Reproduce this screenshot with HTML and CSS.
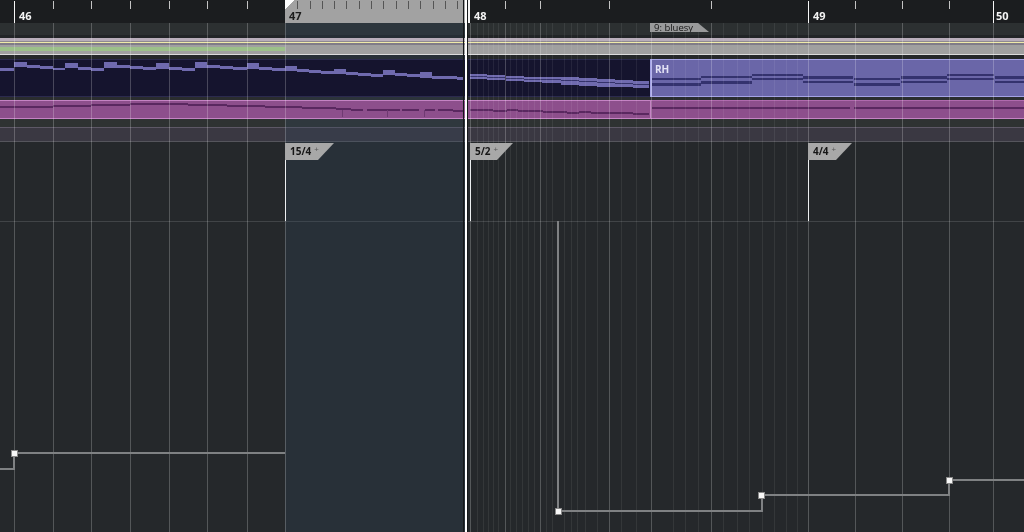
FILE: index.html
```html
<!DOCTYPE html>
<html lang="en">
<head>
<meta charset="utf-8">
<title>Arrangement</title>
<link rel="stylesheet" href="styles.css">
</head>
<body>
<main class="stage">
  <header class="ruler">
    <div class="range"></div>
  </header>
  <div class="marker-lane"></div>
  <section class="track stripes">
    <div class="s-lilac"></div>
    <div class="s-soft"></div>
    <div class="s-yellow"></div>
    <div class="s-gap"></div>
    <div class="s-grey"></div>
    <div class="s-white"></div>
  </section>
  <div class="gap-a"></div>
  <section class="track midi">
    <div class="part-dark"></div>
    <div class="part-rh"><span class="part-name">RH</span></div>
  </section>
  <div class="gap-b"></div>
  <section class="track pink">
    <div class="pink-a"></div>
    <div class="pink-b"></div>
  </section>
  <div class="gap-c"></div>
  <div class="lane-tempo"></div>
  <div class="lane-sig"></div>
  <div class="lane-auto"></div>

  <div class="band"></div>

  <svg class="overlay" width="1024" height="532" viewBox="0 0 1024 532" aria-hidden="true">
    <!-- green automation strip on the first track -->
    <path class="green" d="M0 47h285v4H0z"/>
    <!-- notes -->
    <path class="note" d="M0 68h14v3H0zM14 62h13v5H14zM27 65h13v3H27zM40 66h13v3H40zM53 68h12v2H53zM65 63h13v5H65zM78 67h13v3H78zM91 68h13v3H91zM104 62h13v6h-13zM117 65h13v3h-13zM130 66h13v3h-13zM143 67h13v3h-13zM156 63h13v6h-13zM169 67h13v3h-13zM182 68h13v3h-13zM195 62h12v6h-12zM207 65h13v3h-13zM220 66h13v3h-13zM233 67h14v3h-14zM247 63h12v6h-12zM259 67h13v3h-13zM272 68h13v3h-13zM285 66h12v5h-12zM297 69h12v3h-12zM309 70h12v3h-12zM321 71h13v3h-13zM334 69h12v5h-12zM346 72h12v3h-12zM358 73h13v3h-13zM371 74h12v3h-12zM383 70h12v5h-12zM395 73h12v3h-12zM407 74h13v3h-13zM420 72h12v6h-12zM432 76h13v3h-13zM445 76h12v3h-12zM457 77h7v3h-7z"/>
    <path class="note" d="M470 74h17v5h-17zM487 75h18v5h-18zM506 76h18v5h-18zM524 77h18v5h-18zM542 77h19v6h-19zM561 77h18v8h-18zM579 78h18v8h-18zM597 79h18v8h-18zM615 80h18v7h-18zM633 81h16v7h-16z"/>
    <path class="note-line" d="M561 80.500h18M579 81.500h18M597 82.500h18M615 83.500h18M633 84.500h16M542 79.500h19M524 79.500h18M506 78.500h18M487 77.500h18M470 76.500h17"/>
    <path class="note-dark" d="M652 78h49v2h-49zM652 83h49v3h-49zM701 76h51v2h-51zM701 81h51v3h-51zM752 74h51v2h-51zM752 78h51v2h-51zM803 76h50v3h-50zM803 81h50v2h-50zM854 78h46v2h-46zM854 83h46v3h-46zM901 76h46v3h-46zM901 81h46v2h-46zM947 74h47v2h-47zM947 78h47v2h-47zM995 76h29v3h-29zM995 81h29v2h-29z"/>
    <path class="pink-note" d="M0 107h53M53 106h38M91 105h39M130 104h58M188 105h39M227 106h38M265 107h37M302 108h34M336 109h15M351 110h12M367 110h33M402 110h17M425 110h10M438 110h15M453 111h11M470 110h23M493 111h14M507 110h11M518 111h25M543 112h24M567 113h12M579 112h12M591 113h42M633 114h16M652 108h198M854 108h170"/>
    <path class="pink-tick" d="M342.500 110v7M387.500 110v7M424.500 110v7"/>
    <!-- grid -->
    <path class="fine" d="M477 23V532M483 23V532M488 23V532M493 23V532M498 23V532M510 23V532M516 23V532M522 23V532M528 23V532M534 23V532M546 23V532M552 23V532M564 23V532M571 23V532M577 23V532M585 23V532M597 23V532M621 23V532M636 23V532M673 23V532M685 23V532M698 23V532M723 23V532M737 23V532M749 23V532M762 23V532M774 23V532M786 23V532M797 23V532"/>
    <path class="beat" d="M14.500 23V532M53.500 23V532M91.500 23V532M130.500 23V532M169.500 23V532M207.500 23V532M247.500 23V532M285.500 23V532M505.500 23V532M540.500 23V532M609.500 23V532M651 23V532M711.500 23V532M808.500 23V532M855.500 23V532M902.500 23V532M949.500 23V532M993.500 23V532M470.500 23V532"/>
    <!-- signature flags poles -->
    <path class="pole" d="M285.500 143V221M470.500 143V221M808.500 143V221"/>
    <!-- ruler ticks -->
    <path class="tick" d="M53.500 1v8M91.500 1v8M130.500 1v8M169.500 1v8M207.500 1v8M247.500 1v8M505.500 1v8M540.500 1v8M609.500 1v8M711.500 1v8M855.500 1v8M902.500 1v8M949.500 1v8"/>
    <path class="tick-bar" d="M14.500 1V23M808.500 1V23M993.500 1V23"/>
    <path class="tick-range" d="M297.500 1v8M310.500 1v8M322.500 1v8M334.500 1v8M346.500 1v8M359.500 1v8M371.500 1v8M383.500 1v8M396.500 1v8M408.500 1v8M420.500 1v8M433.500 1v8M445.500 1v8M457.500 1v8"/>
    <path class="corner" d="M285 0h9l-9 9z"/>
    <!-- automation curve -->
    <path class="curve" d="M0 469H14V453H285M557.500 221V511H761.500V495H949V480H1024"/>
    <path class="point" d="M11 450h6v6h-6zM555 508h6v6h-6zM758 492h6v6h-6zM946 477h6v6h-6z"/>
    <!-- playhead -->
    <path class="head-shadow" d="M467.500 0V532M463.500 0V532"/>
    <path class="head" d="M465.500 0V532"/>
    <path class="bar-48" d="M469 0V23"/>
  </svg>

  <span class="bar bar-46">46</span>
  <span class="bar bar-47">47</span>
  <span class="bar bar-48-label">48</span>
  <span class="bar bar-49">49</span>
  <span class="bar bar-50">50</span>

  <span class="marker">9: bluesy</span>

  <span class="sig sig-a">15/4<sup>+</sup></span>
  <span class="sig sig-b">5/2<sup>+</sup></span>
  <span class="sig sig-c">4/4<sup>+</sup></span>
</main>
</body>
</html>
```

FILE: styles.css
```css
* { box-sizing: border-box; }

html, body {
  margin: 0;
  padding: 0;
  background: #25282b;
}

.stage {
  position: relative;
  width: 1024px;
  height: 532px;
  overflow: hidden;
  background: #25282b;
  font-family: "Open Sans", "Liberation Sans", sans-serif;
  filter: blur(.4px);
}

/* ruler */
.ruler {
  position: relative;
  z-index: 1;
  height: 23px;
  background: #1b1d1f;
  display: flex;
  padding-left: 285px;
}
.range {
  width: 183px;
  background: #a2a2a2;
}

.marker-lane {
  height: 15px;
  background: linear-gradient(#2c3031 0, #2c3031 12px, #222527 12px);
}

/* tracks */
.track {
  position: relative;
  z-index: 1;
}
.stripes {
  height: 17px;
  display: flex;
  flex-direction: column;
}
.s-lilac { height: 3px; background: #b9aebb; }
.s-soft { height: 1px; background: #8f8a92; }
.s-yellow { height: 1px; background: #efeaa8; }
.s-gap { height: 2px; background: #807c88; }
.s-grey { height: 9px; background: #a0a0a0; }
.s-white { height: 1px; background: #dcdcdc; }

.gap-a { height: 4px; background: #25282a; }

.midi {
  height: 38px;
  display: flex;
}
.part-dark {
  width: 650px;
  background: #15142e;
  border-top: 1px solid #2b2a4e;
  border-bottom: 1px solid #2b2a4e;
}
.part-rh {
  flex: 1;
  background: #6a66a8;
  border: 1px solid #a5a3e6;
  border-width: 1px 0 1px 2px;
  padding: 2px 0 0 3px;
}
.part-name {
  display: block;
  color: #e4e3f6;
  font-size: 10px;
  font-weight: 700;
  line-height: 14px;
}

.gap-b { height: 3px; background: #2a2d2f; }

.pink {
  height: 19px;
  display: flex;
}
.pink-a {
  width: 651px;
  background: #8d4f8c;
  border: 1px solid #c583c4;
  border-width: 1px 1px 1px 0;
}
.pink-b {
  flex: 1;
  background: #8d4f8c;
  border-top: 1px solid #b06aae;
  border-bottom: 1px solid #c583c4;
}

.gap-c { height: 8px; background: #2e3232; }

.lane-tempo {
  height: 15px;
  background: #3a3842;
  border-top: 1px solid #5d5866;
  border-bottom: 1px solid #55555c;
}
.lane-sig {
  height: 80px;
  border-bottom: 1px solid #414447;
}
.lane-auto {
  height: 310px;
}

/* locator range tint */
.band {
  position: absolute;
  left: 285px;
  top: 23px;
  width: 180px;
  height: 509px;
  background: rgba(50, 72, 95, .26);
}

.overlay {
  position: absolute;
  left: 0;
  top: 0;
  z-index: 2;
  shape-rendering: crispEdges;
}
.overlay path { fill: none; }
.overlay .green { fill: #9cc08a; }
.overlay .note { fill: #6f6aae; }
.overlay .note-line { stroke: #34326a; stroke-width: 1; }
.overlay .note-dark { fill: #34326e; }
.overlay .pink-note { stroke: #5a2860; stroke-width: 2; }
.overlay .pink-tick { stroke: #6f3a72; stroke-width: 1; }
.overlay .fine { stroke: rgba(255, 255, 255, .07); stroke-width: 1; }
.overlay .beat { stroke: rgba(255, 255, 255, .22); stroke-width: 1; }
.overlay .pole { stroke: #eceef0; stroke-width: 1; }
.overlay .tick { stroke: #c4c4c4; stroke-width: 1; }
.overlay .tick-bar { stroke: #f6f6f6; stroke-width: 1; }
.overlay .tick-range { stroke: #555; stroke-width: 1; }
.overlay .corner { fill: #fff; }
.overlay .curve { stroke: #7f8183; stroke-width: 2; }
.overlay .point { fill: #f8f8f8; stroke: #8a8a8a; stroke-width: 1; }
.overlay .head { stroke: #fff; stroke-width: 2; }
.overlay .head-shadow { stroke: #16181a; stroke-width: 1; }
.overlay .bar-48 { stroke: #f4f4f4; stroke-width: 2; }

/* bar numbers */
.bar {
  position: absolute;
  top: 8px;
  z-index: 3;
  color: #f4f4f4;
  font-size: 11px;
  font-weight: 700;
  line-height: 15px;
}
.bar-46 { left: 19px; }
.bar-47 { left: 289px; color: #1c1c1c; }
.bar-48-label { left: 474px; }
.bar-49 { left: 813px; }
.bar-50 { left: 996px; }

/* arranger marker */
.marker {
  position: absolute;
  z-index: 3;
  left: 650px;
  top: 23px;
  width: 59px;
  height: 9px;
  padding-left: 4px;
  background: #999a9b;
  color: #161616;
  font-size: 9.500px;
  line-height: 9px;
  clip-path: polygon(0 0, 48px 0, 100% 100%, 0 100%);
}

/* time signature flags */
.sig {
  position: absolute;
  z-index: 3;
  top: 143px;
  height: 17px;
  padding-left: 5px;
  background: #a8a8a8;
  color: #161616;
  font-size: 10px;
  font-weight: 700;
  line-height: 17px;
}
.sig sup {
  margin-left: 3px;
  font-size: 8px;
  font-weight: 400;
  line-height: 0;
  color: #555;
  vertical-align: 3px;
}
.sig-a { left: 285px; width: 49px; clip-path: polygon(0 0, 100% 0, 33px 100%, 0 100%); }
.sig-b { left: 470px; width: 43px; clip-path: polygon(0 0, 100% 0, 27px 100%, 0 100%); }
.sig-c { left: 808px; width: 44px; clip-path: polygon(0 0, 100% 0, 28px 100%, 0 100%); }
```
